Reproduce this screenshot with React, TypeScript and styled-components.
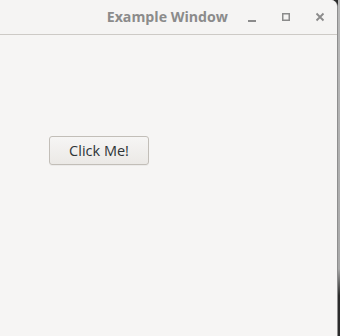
import styled, { createGlobalStyle } from 'styled-components';

const GlobalStyle = createGlobalStyle`
  html, body {
    margin: 0;
    padding: 0;
    background: #2b2b2b;
  }
`;

const Frame = styled.div`
  width: 340px;
  height: 336px;
  display: flex;
  background: #2b2b2b;
`;

const Window = styled.div`
  width: 337px;
  height: 336px;
  background: #f6f5f4;
  border-right: 1px solid #8e8e8e;
  border-top-right-radius: 7px;
  display: flex;
  flex-direction: column;
  font-family: "Open Sans", "Noto Sans", sans-serif;
  overflow: hidden;
`;

const EdgeShade = styled.div`
  width: 2px;
  height: 336px;
  background: linear-gradient(to bottom, #b9b9b9 0%, #a9a9a9 80%, #2b2b2b 88%);
`;

const TitleBar = styled.div`
  height: 35px;
  flex-shrink: 0;
  display: flex;
  align-items: center;
  justify-content: flex-end;
  border-bottom: 1px solid #cdcac6;
  padding-right: 9px;
  box-sizing: border-box;
  background: #f5f4f3;
`;

const Title = styled.div`
  font-weight: 700;
  font-size: 14.2px;
  color: #8b8b8b;
  margin-right: 16px;
  margin-top: -1px;
`;

const Controls = styled.div`
  display: flex;
  align-items: center;
  gap: 18px;
`;

const Control = styled.div`
  width: 16px;
  height: 16px;
  display: flex;
  align-items: center;
  justify-content: center;
`;

const Content = styled.div`
  flex: 1;
  padding: 101px 0 0 49px;
`;

const Button = styled.button`
  width: 100px;
  height: 29px;
  border: 1px solid #c2beb8;
  border-radius: 3px;
  background: linear-gradient(to bottom, #f6f5f4, #ebe9e6);
  box-shadow: 0 1px 0 rgba(0, 0, 0, 0.04);
  font-family: "Open Sans", "Noto Sans", sans-serif;
  font-size: 14.5px;
  color: #2e3436;
  padding: 0;
  cursor: pointer;
`;

const App = () => {
  return (
    <>
      <GlobalStyle />
      <Frame>
        <Window>
          <TitleBar>
            <Title>Example Window</Title>
            <Controls>
              <Control>
                <svg width="16" height="16" viewBox="0 0 16 16">
                  <rect x="4" y="11" width="8" height="2" fill="#8b8b8b" />
                </svg>
              </Control>
              <Control>
                <svg width="16" height="16" viewBox="0 0 16 16">
                  <rect x="4.75" y="4.75" width="6.5" height="6.5" fill="none" stroke="#8b8b8b" strokeWidth="1.5" />
                </svg>
              </Control>
              <Control>
                <svg width="16" height="16" viewBox="0 0 16 16">
                  <path d="M4.5 4.5 L11.5 11.5 M11.5 4.5 L4.5 11.5" stroke="#8b8b8b" strokeWidth="1.8" />
                </svg>
              </Control>
            </Controls>
          </TitleBar>
          <Content>
            <Button>Click Me!</Button>
          </Content>
        </Window>
        <EdgeShade />
      </Frame>
    </>
  );
};

export default App;
